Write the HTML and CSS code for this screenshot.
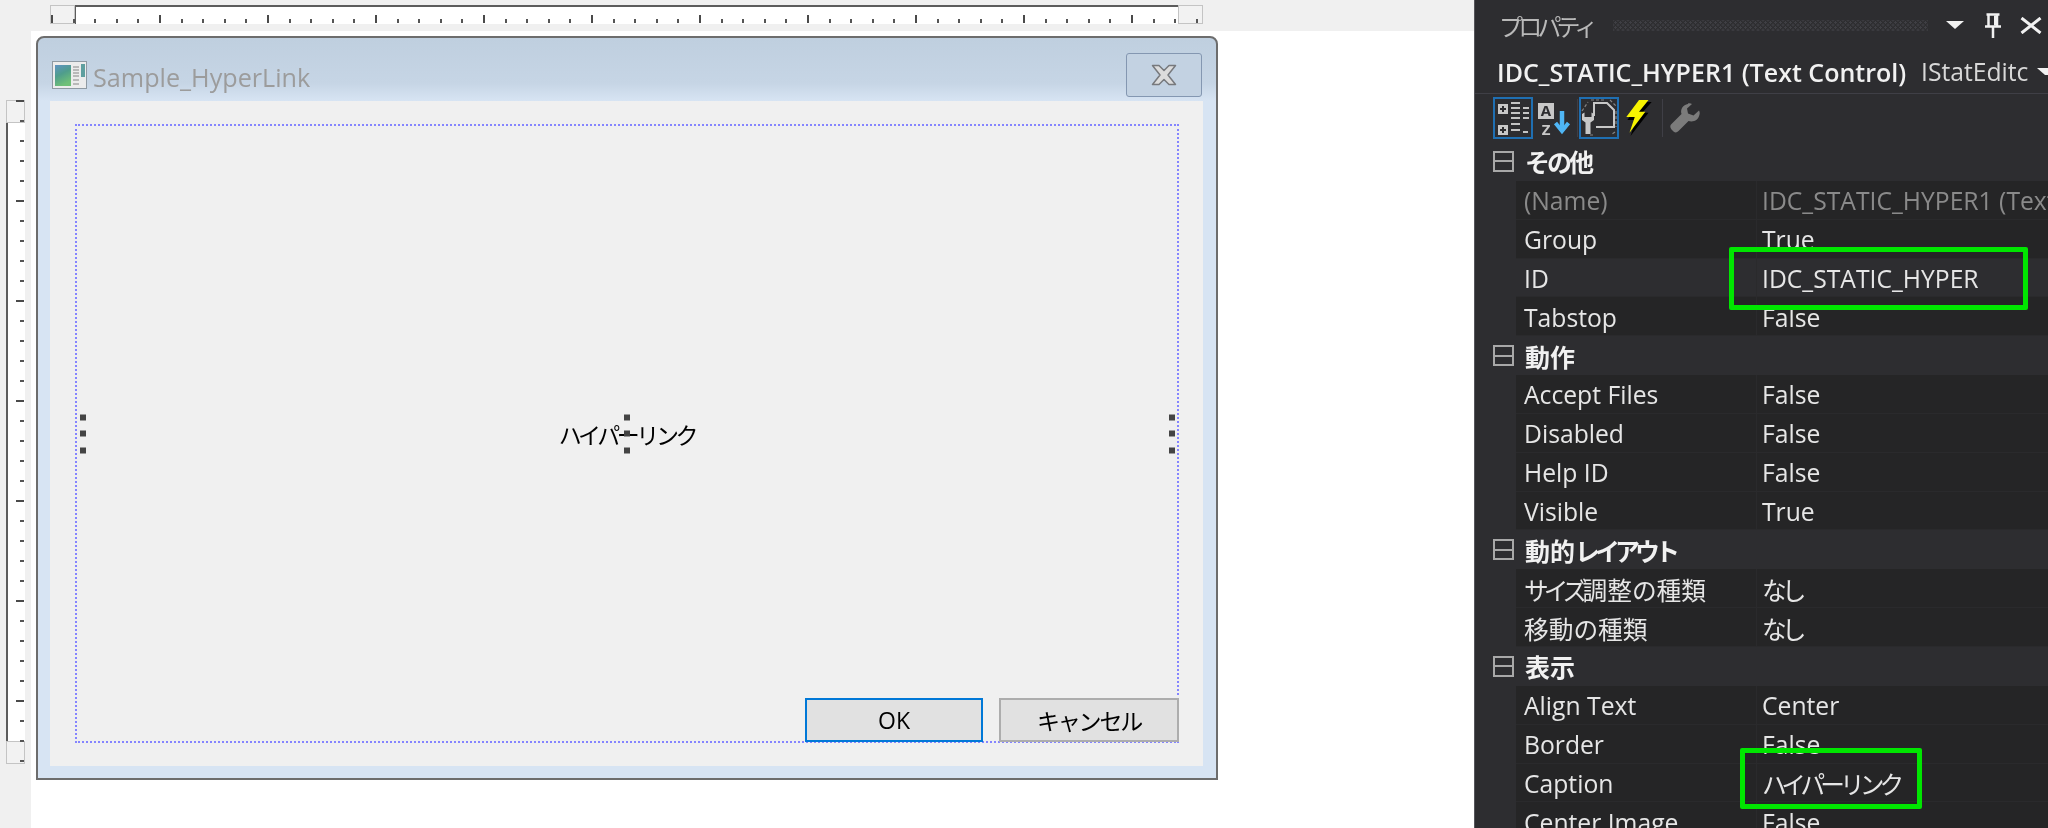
FILE: index.html
```html
<!DOCTYPE html>
<html lang="ja">
<head>
    <meta charset="UTF-8">
    <title>Sample_HyperLink</title>
    <link rel="stylesheet" href="styles.css">
</head>
<body>
    <div class="designer">
        <div class="ruler ruler-h">
            <div class="ruler-end"></div>
            <div class="ruler-track"></div>
            <div class="ruler-end"></div>
        </div>
        <div class="ruler ruler-v">
            <div class="ruler-end"></div>
            <div class="ruler-track"></div>
            <div class="ruler-end"></div>
        </div>
        <div class="canvas">
            <div class="dialog">
                <div class="dialog-title">
                    <svg class="app-icon" width="35" height="29" viewBox="0 0 35 29">
                        <defs>
                            <linearGradient id="appfill" x1="0" y1="0" x2="0.4" y2="1">
                                <stop offset="0" stop-color="#5f93c4"/>
                                <stop offset="0.5" stop-color="#4f9d8c"/>
                                <stop offset="1" stop-color="#6fc078"/>
                            </linearGradient>
                        </defs>
                        <rect x="0.5" y="1.5" width="34" height="27" fill="#ececec" stroke="#8f9aa3"/>
                        <rect x="3" y="5" width="16" height="21" fill="url(#appfill)"/>
                        <rect x="29" y="4" width="4" height="13" fill="#5f9f9f"/>
                        <path d="M21 7h6M21 10h6M21 13h6M21 16h6M21 20h6M21 24h6" stroke="#a8a8a8" stroke-width="1.4"/>
                    </svg>
                    <span class="dialog-name">Sample_HyperLink</span>
                    <div class="dialog-close">
                        <svg width="26" height="22" viewBox="0 0 26 22">
                            <path d="M1.500 1.500h6.500l5 5 5-5h6.500l-7.500 9.500 7.500 9.500h-6.500l-5-5-5 5h-6.500l7.500-9.500z" fill="#dcdcdc" stroke="#77797d" stroke-width="1.500" stroke-linejoin="round"/>
                        </svg>
                    </div>
                </div>
                <div class="dialog-client">
                    <div class="static-box">
                        <span class="static-text">ハイパーリンク</span>
                        <div class="handles handles-left"><i></i><i></i><i></i></div>
                        <div class="handles handles-mid"><i></i><i></i><i></i></div>
                        <div class="handles handles-right"><i></i><i></i><i></i></div>
                        <div class="dialog-buttons">
                            <div class="btn btn-default">OK</div>
                            <div class="btn btn-cancel"><span class="btn-kana">キャンセル</span></div>
                        </div>
                    </div>
                </div>
            </div>
        </div>
    </div>

    <div class="props">
        <div class="props-title">
            <span class="props-name">プロパティ</span>
            <div class="grip"></div>
            <svg class="tri" width="18" height="8" viewBox="0 0 18 8"><path d="M0 0h18l-9 8z" fill="#f1f1f1"/></svg>
            <svg class="pin" width="16" height="25" viewBox="0 0 16 25">
                <path d="M3.500 2v11M12 2v11M1.500 1.500h13M0 13.500h16M8 14v11" fill="none" stroke="#f1f1f1" stroke-width="2.500"/>
                <path d="M9 2.500h3v10h-3z" fill="#f1f1f1"/>
            </svg>
            <svg class="close" width="22" height="17" viewBox="0 0 22 17">
                <path d="M1.500 1l19 15M20.500 1l-19 15" fill="none" stroke="#f1f1f1" stroke-width="3"/>
            </svg>
        </div>
        <div class="props-select">
            <span class="select-name">IDC_STATIC_HYPER1 (Text Control)</span>
            <span class="select-type">IStatEditc</span>
            <svg width="11" height="7" viewBox="0 0 11 7"><path d="M0 0h11v7h-3z" fill="#f1f1f1"/></svg>
        </div>
        <div class="props-tools">
            <div class="tool tool-on">
                <svg width="36" height="38" viewBox="0 0 36 38">
                    <rect x="3" y="5" width="10" height="10" fill="#c8c8c8"/>
                    <rect x="3" y="26" width="10" height="10" fill="#c8c8c8"/>
                    <path d="M5 10h6M8 7v6M5 31h6M8 28v6" stroke="#2d2d30" stroke-width="2"/>
                    <path d="M16 4h9M16 9h9M28 9h6M16 14h9M28 14h6M16 19h9M28 19h6M16 25h9M16 31h9M28 33h5" stroke="#c4c4c4" stroke-width="2"/>
                </svg>
            </div>
            <div class="tool">
                <svg width="36" height="38" viewBox="0 0 36 38">
                    <rect x="3" y="4" width="16" height="16" fill="#c8c8c8"/>
                    <text x="11" y="17" class="az az-a">A</text>
                    <text x="11" y="36" class="az">Z</text>
                    <path d="M27 12v20" stroke="#4fb6f5" stroke-width="4.500"/>
                    <path d="M20.500 24l6.500 8 6.500-8" fill="none" stroke="#4fb6f5" stroke-width="4"/>
                </svg>
            </div>
            <div class="tool-sep"></div>
            <div class="tool tool-on">
                <svg width="36" height="38" viewBox="0 0 36 38">
                    <path d="M13 17V4h13l7 7v17H15" fill="none" stroke="#c8c8c8" stroke-width="2"/>
                    <path d="M10 1h14M29 1l6 6M35 12v16M34 33l-3 2M9 36h4M1 12l6-9" fill="none" stroke="#858585" stroke-width="1.200" stroke-dasharray="3 2"/>
                    <path d="M1 15v6l3.500 2.500V35h5V23.500L13 21v-6l-2.500-1.500V18h-7v-4.500z" fill="#c8c8c8"/>
                </svg>
            </div>
            <div class="tool tool-bolt">
                <svg width="28" height="36" viewBox="0 0 26 34">
                    <path d="M13 1h11l-9 10h6L4 33l5-15H1z" fill="#000" transform="translate(1 1)"/>
                    <path d="M13 0h9l-9 11h6L4 31l5-15H1z" fill="#f7f300"/>
                </svg>
            </div>
            <div class="tool-sep tool-sep-wide"></div>
            <div class="tool tool-wrench">
                <svg width="30" height="30" viewBox="0 0 30 30">
                    <path d="M18 1c-5 1-8 5-6.500 10L1 21.500c-1 1-1 3 .5 5l2 2c2 1.500 3.500 1 5-.5L18.500 18c5 1.500 10-1 11-6.500.5-1.500 0-3-.5-4l-5.500 5-5.500-2-1-5 5-4.500c-1-.5-2.500-1-4-.5z" fill="#7b7b7b"/>
                </svg>
            </div>
        </div>

        <div class="grid">
            <div class="cat"><span class="toggle"></span><span class="cat-other">その他</span></div>
            <div class="row"><span class="key dim">(Name)</span><span class="val dim">IDC_STATIC_HYPER1 (Text Control)</span></div>
            <div class="row"><span class="key">Group</span><span class="val">True</span></div>
            <div class="row row-sel"><span class="key">ID</span><span class="val">IDC_STATIC_HYPER</span></div>
            <div class="row"><span class="key">Tabstop</span><span class="val">False</span></div>

            <div class="cat"><span class="toggle"></span><span>動作</span></div>
            <div class="row"><span class="key">Accept Files</span><span class="val">False</span></div>
            <div class="row"><span class="key">Disabled</span><span class="val">False</span></div>
            <div class="row"><span class="key">Help ID</span><span class="val">False</span></div>
            <div class="row"><span class="key">Visible</span><span class="val">True</span></div>

            <div class="cat"><span class="toggle"></span><span>動的<span class="kana">レイアウト</span></span></div>
            <div class="row"><span class="key"><span><span class="kana">サイズ</span>調整の種類</span></span><span class="val kana">なし</span></div>
            <div class="row"><span class="key">移動の種類</span><span class="val kana">なし</span></div>

            <div class="cat"><span class="toggle"></span><span>表示</span></div>
            <div class="row"><span class="key">Align Text</span><span class="val">Center</span></div>
            <div class="row"><span class="key">Border</span><span class="val">False</span></div>
            <div class="row"><span class="key">Caption</span><span class="val kana">ハイパーリンク</span></div>
            <div class="row"><span class="key">Center Image</span><span class="val">False</span></div>
        </div>

        <div class="mark mark-id"></div>
        <div class="mark mark-caption"></div>
    </div>
</body>
</html>
```

FILE: styles.css
```css
html, body {
    margin: 0;
    height: 828px;
    overflow: hidden;
}
body {
    display: flex;
    font-family: "Open Sans", "Noto Sans CJK JP", sans-serif;
    background: #fff;
}

/* left side: resource editor */
.designer {
    width: 1474px;
    height: 828px;
    display: grid;
    grid-template-columns: 31px 1fr;
    grid-template-rows: 31px 1fr;
    background: #f0f0f0;
    filter: blur(0.4px);
}
.ruler {
    display: flex;
    position: relative;
}
.ruler::after {
    content: "";
    position: absolute;
    pointer-events: none;
}
.ruler-end {
    box-sizing: border-box;
    flex: none;
    background: #f2f2f2;
    border: 1px solid #c4c4c4;
}
.ruler-track {
    flex: 1;
    background: #fff;
}
.ruler-h {
    grid-column: 1 / 3;
    grid-row: 1;
    width: 1153px;
    height: 19px;
    margin: 5px 0 0 50px;
}
.ruler-h .ruler-end {
    width: 25px;
}
.ruler-h .ruler-track {
    border-top: 2px solid #5c5c5c;
    border-left: 1px solid #5c5c5c;
}
.ruler-h::after {
    left: 1px;
    right: 0;
    bottom: 1px;
    height: 8px;
    background:
        repeating-linear-gradient(to right, #4a4a4a 0 2px, transparent 2px 108px) 0 0 / 100% 8px no-repeat,
        repeating-linear-gradient(to right, #555 0 2px, transparent 2px 21.6px) 0 100% / 100% 4px no-repeat;
}
.ruler-v {
    grid-column: 1;
    grid-row: 2;
    flex-direction: column;
    width: 19px;
    height: 664px;
    margin: 69px 0 0 6px;
}
.ruler-v .ruler-end {
    height: 23px;
}
.ruler-v .ruler-track {
    border-left: 2px solid #5c5c5c;
}
.ruler-v::after {
    top: 0;
    bottom: 0;
    right: 1px;
    width: 8px;
    background:
        repeating-linear-gradient(to bottom, #4a4a4a 0 2px, transparent 2px 100px) 100% 0 / 8px 100% no-repeat,
        repeating-linear-gradient(to bottom, #555 0 2px, transparent 2px 20px) 100% 0 / 4px 100% no-repeat;
}
.canvas {
    grid-column: 2;
    grid-row: 2;
    background: #fff;
    padding: 5px 6px 5px 5px;
}

/* dialog being edited */
.dialog {
    box-sizing: border-box;
    width: 1182px;
    height: 744px;
    border: 2px solid #6d6d6d;
    border-radius: 8px 8px 0 0;
    background: linear-gradient(to bottom, #bfcfdf 0, #c6d5e5 45px, #d7e4f3 63px);
    display: flex;
    flex-direction: column;
}
.dialog-title {
    height: 63px;
    flex: none;
    display: flex;
    align-items: center;
    padding: 9px 14px 0 14px;
    box-sizing: border-box;
}
.app-icon {
    margin-right: 6px;
}
.dialog-name {
    font-size: 25.2px;
    color: #9c9c9c;
    flex: 1;
    margin-top: 6px;
}
.dialog-close {
    box-sizing: border-box;
    width: 76px;
    height: 44px;
    border: 1px solid #8497b1;
    border-radius: 3px;
    background: #c3d2e2;
    display: flex;
    align-items: center;
    justify-content: center;
    margin-top: 2px;
}
.dialog-client {
    flex: 1;
    margin: 0 13px 12px 12px;
    padding: 23px 24px 23px 25px;
    background: #f0f0f0;
    display: flex;
}
.static-box {
    flex: 1;
    position: relative;
    border: 2px dotted #8585ff;
    display: flex;
    align-items: center;
    justify-content: center;
}
.static-text {
    font-family: "Noto Sans CJK JP", sans-serif;
    font-size: 23px;
    letter-spacing: -3.4px;
    color: #000;
}
.handles {
    position: absolute;
    top: 50%;
    transform: translateY(-50%);
    display: flex;
    flex-direction: column;
    gap: 10.5px;
}
.handles i {
    display: block;
    width: 6px;
    height: 6px;
    background: #444;
}
.handles-left {
    left: 3px;
}
.handles-mid {
    left: calc(50% - 3px);
}
.handles-right {
    right: 2px;
}
.dialog-buttons {
    position: absolute;
    right: -2px;
    bottom: -1px;
    display: flex;
    gap: 16px;
}
.btn {
    box-sizing: border-box;
    height: 44px;
    background: #e1e1e1;
    border: 2px solid #adadad;
    font-size: 23px;
    color: #000;
    display: flex;
    align-items: center;
    justify-content: center;
}
.btn-kana {
    letter-spacing: -2.2px;
}
.btn-default {
    width: 178px;
    border-color: #0078d7;
}
.btn-cancel {
    width: 180px;
    box-shadow: 0 -3px 0 #f0f0f0;
}

/* right side: properties window */
.props {
    position: relative;
    flex: 1;
    height: 828px;
    background: #2d2d30;
    border-left: 1px solid #55555a;
    box-sizing: border-box;
    color: #e6e6e6;
    overflow: hidden;
    filter: blur(0.4px);
}
.props-title {
    height: 50px;
    display: flex;
    align-items: center;
    padding-left: 24px;
}
.props-name {
    font-size: 24px;
    letter-spacing: -4.8px;
    color: #b9b9b9;
    width: 114px;
    flex: none;
}
.grip {
    width: 315px;
    height: 11px;
    background:
        radial-gradient(circle, #3f3f44 1px, transparent 1.3px) 0 0 / 5px 5px,
        radial-gradient(circle, #3f3f44 1px, transparent 1.3px) 2.500px 2.500px / 5px 5px;
}
.tri {
    margin-left: 18px;
}
.pin {
    margin-left: 21px;
}
.close {
    margin-left: 19px;
}
.props-select {
    height: 44px;
    box-sizing: border-box;
    display: flex;
    align-items: center;
    padding-left: 22px;
    border-bottom: 1px solid #3f3f46;
    white-space: nowrap;
}
.select-name {
    font-size: 25px;
    font-weight: 600;
    color: #f1f1f1;
    width: 424px;
    flex: none;
}
.select-type {
    font-size: 24.7px;
    color: #d8d8d8;
    width: 116px;
    flex: none;
}
.props-tools {
    height: 48px;
    display: flex;
    align-items: center;
    padding-left: 18px;
}
.tool {
    box-sizing: border-box;
    width: 40px;
    height: 42px;
    display: flex;
    align-items: center;
    justify-content: center;
    flex: none;
}
.tool-on {
    border: 2px solid #1f6fb2;
}
.tool-sep {
    width: 1px;
    height: 38px;
    background: #3f3f46;
    margin: 0 1px 0 4px;
    flex: none;
}
.tool-sep-wide {
    margin: 0 2px 0 3px;
}
.az {
    font-family: "Open Sans", sans-serif;
    font-size: 15px;
    font-weight: 700;
    text-anchor: middle;
    fill: #c8c8c8;
}
.az-a {
    fill: #2d2d30;
}
.grid {
    display: flex;
    flex-direction: column;
    white-space: nowrap;
}
.cat, .row {
    height: 38.85px;
    flex: none;
    display: flex;
    align-items: center;
    box-sizing: border-box;
}
.cat {
    padding-left: 18px;
    font-size: 25px;
    font-weight: 600;
    color: #f1f1f1;
}
.cat-other {
    letter-spacing: -3px;
}
.kana {
    letter-spacing: -0.2em;
}
.toggle {
    box-sizing: border-box;
    width: 21px;
    height: 21px;
    border: 2px solid #a8a8a8;
    margin-right: 11px;
    background: linear-gradient(#a8a8a8, #a8a8a8) center / 100% 2px no-repeat;
}
.row {
    margin-left: 41px;
    background: #252526;
    border-bottom: 1px solid #2a2a2c;
    font-size: 24.7px;
}
.key {
    box-sizing: border-box;
    width: 241px;
    height: 100%;
    padding: 2px 0 0 8px;
    display: flex;
    align-items: center;
    border-right: 1px solid #2a2a2c;
    flex: none;
}
.val {
    padding: 2px 0 0 5px;
}
.dim {
    color: #8a8a8a;
}
.row-sel .key, .row-sel {
    background: #2d2d30;
}
.mark {
    position: absolute;
    box-sizing: border-box;
    border: 5px solid #00e600;
    border-radius: 2px;
}
.mark-id {
    left: 254px;
    top: 247px;
    width: 299px;
    height: 63px;
}
.mark-caption {
    left: 265px;
    top: 748px;
    width: 182px;
    height: 61px;
}
```
